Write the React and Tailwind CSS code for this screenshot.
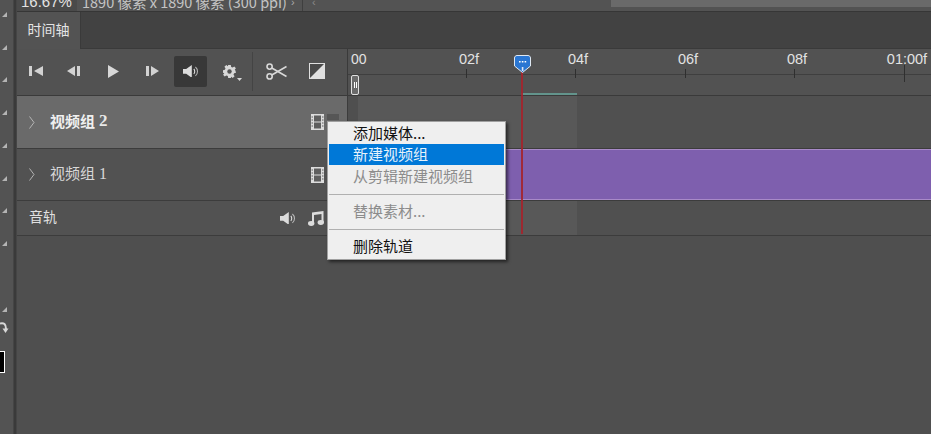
import React from "react";

const CJK = { fontFamily: '"Noto Sans CJK SC","Noto Sans",sans-serif' };
const SANS = { fontFamily: '"Liberation Sans",sans-serif' };
const SERIF = { fontFamily: '"Liberation Serif",serif' };

function Tri() {
  return (
    <svg width="5" height="5" viewBox="0 0 5 5" className="block">
      <path d="M5 0V5H0Z" fill="#b4b4b4" />
    </svg>
  );
}

function Film() {
  return (
    <svg width="13" height="16" viewBox="0 0 13 16" className="block" fill="none">
      <rect x="0" y="0" width="13" height="16" fill="#dcdcdc" />
      <rect x="3" y="1.5" width="7" height="6" fill="#5e5e5e" />
      <rect x="3" y="8.5" width="7" height="6" fill="#5e5e5e" />
      <path d="M0.5 3h1.5M0.5 6h1.5M0.5 9h1.5M0.5 12h1.5M11 3h1.5M11 6h1.5M11 9h1.5M11 12h1.5" stroke="#5e5e5e" />
    </svg>
  );
}

function Speaker({ w = 16 }) {
  return (
    <svg width={w} height={w * 0.8} viewBox="0 0 20 16" className="block" fill="none">
      <path d="M0 5H4L11 0V16L4 11H0Z" fill="#dcdcdc" />
      <path d="M13.5 5C15 6.5 15 9.5 13.5 11" stroke="#dcdcdc" strokeWidth="1.4" />
      <path d="M15.5 2.5C19 5.5 19 10.5 15.5 13.5" stroke="#dcdcdc" strokeWidth="1.3" opacity="0.75" />
    </svg>
  );
}

function Row({ bg, h, children }) {
  return <div className={`flex items-center border-b border-[#3c3c3c] ${bg} ${h}`}>{children}</div>;
}

function Chevron() {
  return (
    <svg width="6" height="13" viewBox="0 0 6 13" className="ml-[12px] block" fill="none">
      <path d="M0.5 0.5L5 6.5L0.5 12.5" stroke="#bdbdbd" strokeWidth="0.9" />
    </svg>
  );
}

function Item({ active, disabled, children, extra = "" }) {
  const color = active ? "bg-[#0078d7] text-[#e6f2fb]" : disabled ? "text-[#8c8c8c]" : "text-[#111111]";
  return <div className={`h-[21px] shrink-0 pl-[24px] text-[15px] leading-[19px] ${color} ${extra}`}>{children}</div>;
}

const ticks = [
  ["02f", "w-[109px]"],
  ["04f", "w-[109px]"],
  ["06f", "w-[110px]"],
  ["08f", "w-[109px]"],
  ["01:00f", "w-[110px]"],
];

const trackBg = { background: "linear-gradient(to right,#4f4f4f 10px,#585858 10px,#585858 229px,#505050 229px)" };

export default function App() {
  return (
    <div className="relative flex h-[434px] w-[931px] overflow-hidden bg-[#505050] text-[#dedede]" style={CJK}>
      {/* left tool strip */}
      <div className="flex w-[13px] shrink-0 flex-col items-start bg-[#535353] pl-[2px]">
        {[0, 1, 2, 3, 4, 5, 6, 7].map((i) => (
          <div key={i} className={`flex h-[32.75px] shrink-0 items-end ${i === 0 ? "mt-[-16px]" : ""}`}>
            <Tri />
          </div>
        ))}
        <div className="h-[32.75px] shrink-0" />
        <div className="flex h-[32.75px] shrink-0 items-end">
          <Tri />
        </div>
        <svg width="9" height="12" viewBox="0 0 9 12" className="ml-[-2px] mt-[10px] block" fill="none">
          <path d="M0 1.5C4 0.5 6 2 6 7" stroke="#d8d8d8" strokeWidth="2" />
          <path d="M2.5 6.5H8.5L5.5 11Z" fill="#d8d8d8" />
        </svg>
        <div className="ml-[-3px] mt-[17px] h-[22px] w-[6px] border border-white bg-black" />
      </div>
      <div className="w-[4px] shrink-0 border-x border-[#454545] bg-[#3a3a3a]" />

      {/* main */}
      <div className="flex min-w-0 flex-1 flex-col">
        {/* doc status bar */}
        <div className="flex h-[12px] shrink-0 items-start overflow-hidden border-b border-[#363636] bg-[#535353]">
          <div className="mt-[-7px] w-[60px] bg-[#4a4a4a] pl-[4px] text-[15px] leading-[18px] text-[#e2e2e2]" style={SANS}>
            16.67%
          </div>
          <div className="mt-[-7px] w-[214px] pl-[5px] text-[14.5px] leading-[18px] text-[#c4c4c4]">
            <span className="whitespace-nowrap">1890 像素 x 1890 像素 (300 ppi)</span>
          </div>
          <span className="mt-[-6px] w-[11px] text-[11px] leading-[16px] text-[#aaaaaa]" style={SANS}>›</span>
          <div className="h-[11px] w-px bg-[#3f3f3f]" />
          <span className="ml-[9px] mt-[-6px] text-[11px] leading-[16px] text-[#8a8a8a]" style={SANS}>‹</span>
          <div className="flex-1" />
          <div className="h-[7px] w-[320px] bg-[#6a6a6a]" />
        </div>

        {/* tab bar */}
        <div className="flex h-[37px] shrink-0 border-b border-[#3a3a3a] bg-[#424242]">
          <div className="flex h-[37px] w-[64px] items-center justify-center border-r border-[#3a3a3a] bg-[#535353] pb-[2px] text-[14px] text-[#e4e4e4]">
            时间轴
          </div>
        </div>

        {/* panel */}
        <div className="flex min-h-0 flex-1">
          {/* left column */}
          <div className="flex w-[331px] shrink-0 flex-col">
            <div className="flex h-[47px] shrink-0 items-center border-b border-r border-[#3a3a3a] bg-[#525252] pb-[2px] pl-[12px]">
              <svg width="14" height="10" viewBox="0 0 14 10" className="block"><path d="M0 0H3V10H0ZM14 0V10L5 5Z" fill="#d2d2d2" /></svg>
              <svg width="13" height="10" viewBox="0 0 13 10" className="ml-[24px] block"><path d="M8 0V10L0 5ZM10 0H13V10H10Z" fill="#d2d2d2" /></svg>
              <svg width="11" height="13" viewBox="0 0 11 13" className="ml-[28px] block"><path d="M0 0L11 6.5L0 13Z" fill="#d8d8d8" /></svg>
              <svg width="13" height="10" viewBox="0 0 13 10" className="ml-[27px] block"><path d="M0 0H3V10H0ZM5 0L13 5L5 10Z" fill="#d2d2d2" /></svg>
              <div className="ml-[15px] flex h-[31px] w-[33px] items-center justify-center rounded-[2px] bg-[#383838]">
                <Speaker w={16} />
              </div>
              <svg width="13" height="13" viewBox="0 0 13 13" className="ml-[16px] block">
                <path d="M5.2 0H7.8L8.2 1.9L9.7 2.5L11.3 1.4L12.9 3.3L11.7 4.8L12.3 5.2L13 7.8L11.1 8.2L10.5 9.7L11.6 11.3L9.7 12.9L8.2 11.7L7.8 13H5.2L4.8 11.1L3.3 10.5L1.7 11.6L0.1 9.7L1.3 8.2L0 7.8V5.2L1.9 4.8L2.5 3.3L1.4 1.7L3.3 0.1L4.8 1.3Z" fill="#d8d8d8" />
                <circle cx="6.5" cy="6.5" r="2.2" fill="#525252" />
              </svg>
              <svg width="5" height="3" viewBox="0 0 5 3" className="ml-[1px] mt-[17px] block"><path d="M0 0H5L2.5 3Z" fill="#d8d8d8" /></svg>
              <div className="ml-[10px] h-[39px] w-px bg-[#444444]" />
              <svg width="21" height="17" viewBox="0 0 21 17" className="ml-[13px] block" fill="none">
                <circle cx="3.6" cy="3.6" r="2.6" stroke="#d8d8d8" strokeWidth="1.6" />
                <circle cx="3.6" cy="13.4" r="2.6" stroke="#d8d8d8" strokeWidth="1.6" />
                <path d="M5.8 5L20.5 13.5M5.8 12L20.5 3.5" stroke="#d8d8d8" strokeWidth="1.6" />
              </svg>
              <svg width="16" height="16" viewBox="0 0 16 16" className="ml-[22px] block">
                <rect width="16" height="16" fill="#e0e0e0" />
                <path d="M1 1H15L1 15Z" fill="#4a4a4a" />
              </svg>
            </div>
            <Row bg="bg-[#6a6a6a]" h="h-[53px] shrink-0 border-r">
              <Chevron />
              <span className="mb-[2px] ml-[15px] text-[15px] font-bold text-[#f0f0f0]">视频组</span>
              <span className="mb-[2px] ml-[4px] text-[17px] font-bold text-[#e8e8e8]" style={SERIF}>2</span>
              <div className="ml-auto"><Film /></div>
              <div className="ml-[3px] mb-[10px] mr-[8px] h-[6px] w-[12px] bg-[#565656]" />
            </Row>
            <Row bg="bg-[#525252]" h="h-[52px] shrink-0 border-r">
              <Chevron />
              <span className="mb-[2px] ml-[15px] text-[15px] text-[#d8d8d8]">视频组</span>
              <span className="mb-[2px] ml-[4px] text-[16px] text-[#d8d8d8]" style={SERIF}>1</span>
              <div className="ml-auto mr-[23px]"><Film /></div>
            </Row>
            <Row bg="bg-[#525252]" h="h-[35px] shrink-0 border-r">
              <span className="mb-[3px] ml-[12px] text-[14px] text-[#e0e0e0]">音轨</span>
              <div className="ml-auto"><Speaker w={16} /></div>
              <svg width="16" height="15" viewBox="0 0 16 15" className="ml-[12px] mr-[23px] block">
                <path d="M4 1.5L15.5 0V11.5H13.5V3L6 4V13H4Z" fill="#dcdcdc" />
                <ellipse cx="3.2" cy="12.5" rx="3.2" ry="2.4" fill="#dcdcdc" />
                <ellipse cx="12.8" cy="11.5" rx="3.2" ry="2.4" fill="#dcdcdc" />
              </svg>
            </Row>
            <div className="flex-1 bg-[#4f4f4f]" />
          </div>

          {/* timeline */}
          <div className="relative flex min-w-0 flex-1 flex-col">
            <div className="flex h-[47px] shrink-0 flex-col border-b border-[#3a3a3a] bg-[#525252]">
              <div className="flex h-[26px] shrink-0 border-b border-[#3f3f3f]">
                <div className="relative w-[10px] shrink-0">
                  <span className="absolute left-[3px] top-[1px] text-[14px] leading-[18px] text-[#e2e2e2]" style={SANS}>00</span>
                </div>
                {ticks.map(([t, w]) => (
                  <div key={t} className={`relative shrink-0 ${w}`}>
                    <span className="absolute right-[-2px] top-[1px] translate-x-1/2 whitespace-nowrap text-[14.5px] leading-[18px] text-[#e2e2e2]" style={SANS}>{t}</span>
                    <div className={`absolute right-0 w-px bg-[#2f2f2f] ${t === "01:00f" ? "top-[16px] h-[17px]" : "top-[20px] h-[9px]"}`} />
                  </div>
                ))}
              </div>
              <div className="relative flex-1">
                <div className="absolute left-[3px] top-0 flex h-[20px] w-[8px] items-center justify-center gap-px rounded-[2px] border border-[#e0e0e0] bg-[#6a6a6a]">
                  <div className="h-[6px] w-px bg-white" />
                  <div className="h-[6px] w-px bg-white" />
                </div>
                <div className="absolute bottom-0 left-[173px] h-[2px] w-[56px] bg-[#63948c]" />
              </div>
            </div>

            <div className="flex h-[140px] shrink-0 flex-col">
              <div className="h-[53px] shrink-0 border-b border-[#3c3c3c]" style={trackBg} />
              <div className="relative h-[52px] shrink-0 border-b border-[#3c3c3c]" style={trackBg}>
                <div className="absolute inset-y-0 left-[150px] right-0 border-y border-[#a88ac8] bg-[#7e5fae]" />
              </div>
              <div className="h-[35px] shrink-0 border-b border-[#3c3c3c]" style={trackBg} />
            </div>
            <div className="flex-1 bg-[#4f4f4f]" />

            {/* playhead */}
            <div className="absolute left-[173px] top-[22px] h-[163px] w-[2px] bg-[#a5242c] opacity-90" />
            <svg width="17" height="18" viewBox="0 0 17 18" className="absolute left-[166px] top-[6px] block">
              <path d="M3 0.5H14C15.4 0.5 16.5 1.6 16.5 3V11L8.5 17.5L0.5 11V3C0.5 1.6 1.6 0.5 3 0.5Z" fill="#2a76d2" stroke="#dfe8f2" />
              <path d="M5 6h1.6v1.6H5ZM7.8 6h1.6v1.6H7.8ZM10.6 6h1.6v1.6h-1.6Z" fill="#ffffff" />
              <path d="M7.8 12h1.6v4h-1.6Z" fill="#dfe8f2" />
            </svg>
          </div>
        </div>
      </div>

      {/* context menu */}
      <div className="absolute left-[327px] top-[121px] flex h-[139px] w-[179px] flex-col border border-[#a0a0a0] bg-[#efefef] px-px pt-px shadow-[2px_2px_3px_rgba(0,0,0,0.55)]">
        <Item>添加媒体...</Item>
        <Item active>新建视频组</Item>
        <Item disabled extra="mt-px">从剪辑新建视频组</Item>
        <div className="mb-[6px] mt-[7px] h-px shrink-0 bg-[#b0b0b0]" />
        <Item disabled>替换素材...</Item>
        <div className="mb-[6px] mt-[7px] h-px shrink-0 bg-[#b0b0b0]" />
        <Item>删除轨道</Item>
      </div>
    </div>
  );
}
